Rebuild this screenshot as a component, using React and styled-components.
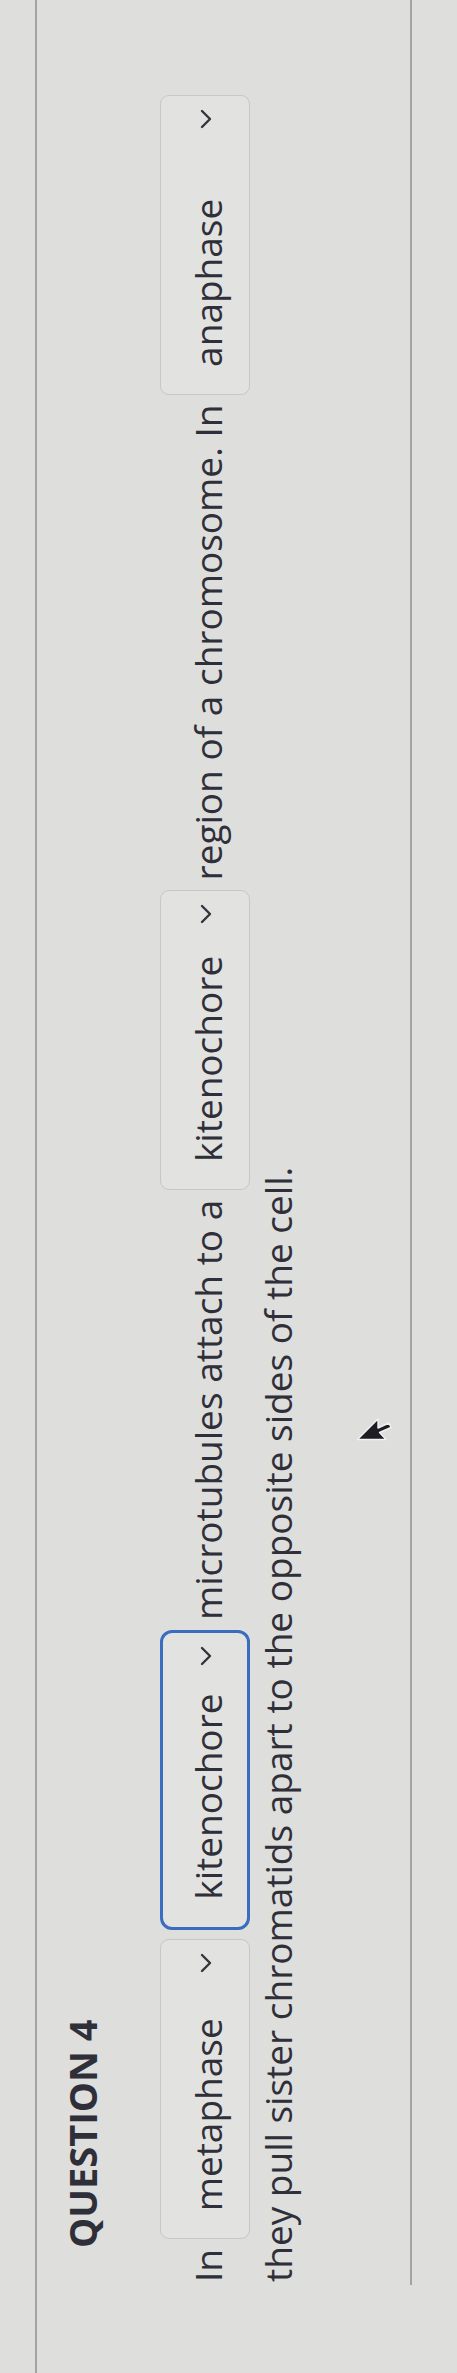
import React from "react";
import styled, { createGlobalStyle } from "styled-components";

const PAGE_BG = "#dededc";
const INK = "#2f2f3a";
const RULE = "#a3a3a1";

const GlobalStyle = createGlobalStyle`
  html, body {
    margin: 0;
    padding: 0;
    background: ${PAGE_BG};
    overflow: hidden;
  }
  * { box-sizing: border-box; }
`;

/* Portrait viewport that holds the landscape quiz sheet turned on its side */
const Stage = styled.div`
  width: 457px;
  height: 2373px;
  overflow: hidden;
  background: ${PAGE_BG};
`;

const Sheet = styled.div`
  position: relative;
  width: 2373px;
  height: 457px;
  transform-origin: 0 0;
  transform: translateY(2373px) rotate(-90deg);
  display: flex;
  flex-direction: column;
  background: ${PAGE_BG};
  font-family: "Open Sans", "Noto Sans", sans-serif;
  color: ${INK};
`;

const QuestionBlock = styled.section`
  margin-top: 35px;
  border-top: 2px solid ${RULE};
  display: flex;
  flex-direction: column;
`;

const Heading = styled.h2`
  margin: 19px 0 0;
  padding-left: 125px;
  font-size: 38px;
  font-weight: 700;
  line-height: normal;
  color: ${INK};
`;

const Prompt = styled.p`
  margin: 52px 0 0 91px;
  width: 2225px;
  font-size: 37px;
  font-weight: 400;
  line-height: 56px;
`;

const Select = styled.span`
  display: inline-flex;
  align-items: center;
  justify-content: space-between;
  vertical-align: baseline;
  width: 300px;
  height: 90px;
  padding: 5px 13px 0 27px;
  background: #e2e2e0;
  border: ${(p) => (p.$focused ? "3px solid #3a6cc0" : "1px solid #c7c7c5")};
  border-radius: ${(p) => (p.$focused ? "12px" : "9px")};
`;

const SelectValue = styled.span`
  line-height: 50px;
  white-space: nowrap;
`;

const Chevron = styled.svg`
  flex: none;
  width: 20px;
  height: 12px;
  margin-top: -4px;
`;

const BottomRule = styled.div`
  margin: 104px 0 0 88px;
  border-top: 2px solid ${RULE};
`;

const Pointer = styled.svg`
  position: absolute;
  left: 932px;
  top: 356px;
  width: 24px;
  height: 38px;
`;

function Dropdown({ value, focused }) {
  return (
    <Select $focused={focused} role="combobox" aria-expanded="false">
      <SelectValue>{value}</SelectValue>
      <Chevron viewBox="0 0 20 12" fill="none">
        <path
          d="M2 2 L10 10 L18 2"
          stroke="#34343e"
          strokeWidth="2.4"
          strokeLinecap="round"
          strokeLinejoin="round"
        />
      </Chevron>
    </Select>
  );
}

export default function App() {
  return (
    <>
      <GlobalStyle />
      <Stage>
        <Sheet>
          <QuestionBlock>
            <Heading>QUESTION 4</Heading>
            <Prompt>
              In <Dropdown value="metaphase" />{" "}
              <Dropdown value="kitenochore" focused /> microtubules attach to a{" "}
              <Dropdown value="kitenochore" /> region of a chromosome. In{" "}
              <Dropdown value="anaphase" /> they pull sister chromatids apart to
              the opposite sides of the cell.
            </Prompt>
          </QuestionBlock>
          <BottomRule />
          <Pointer viewBox="0 0 24 38">
            <path
              d="M1.5 1.5 L1.5 30 L8.5 23.5 L13.5 35 L18 33 L13 22 L22 22 Z"
              fill="#1e1e22"
              stroke="#f2f2f2"
              strokeWidth="1.4"
              strokeLinejoin="round"
            />
          </Pointer>
        </Sheet>
      </Stage>
    </>
  );
}
